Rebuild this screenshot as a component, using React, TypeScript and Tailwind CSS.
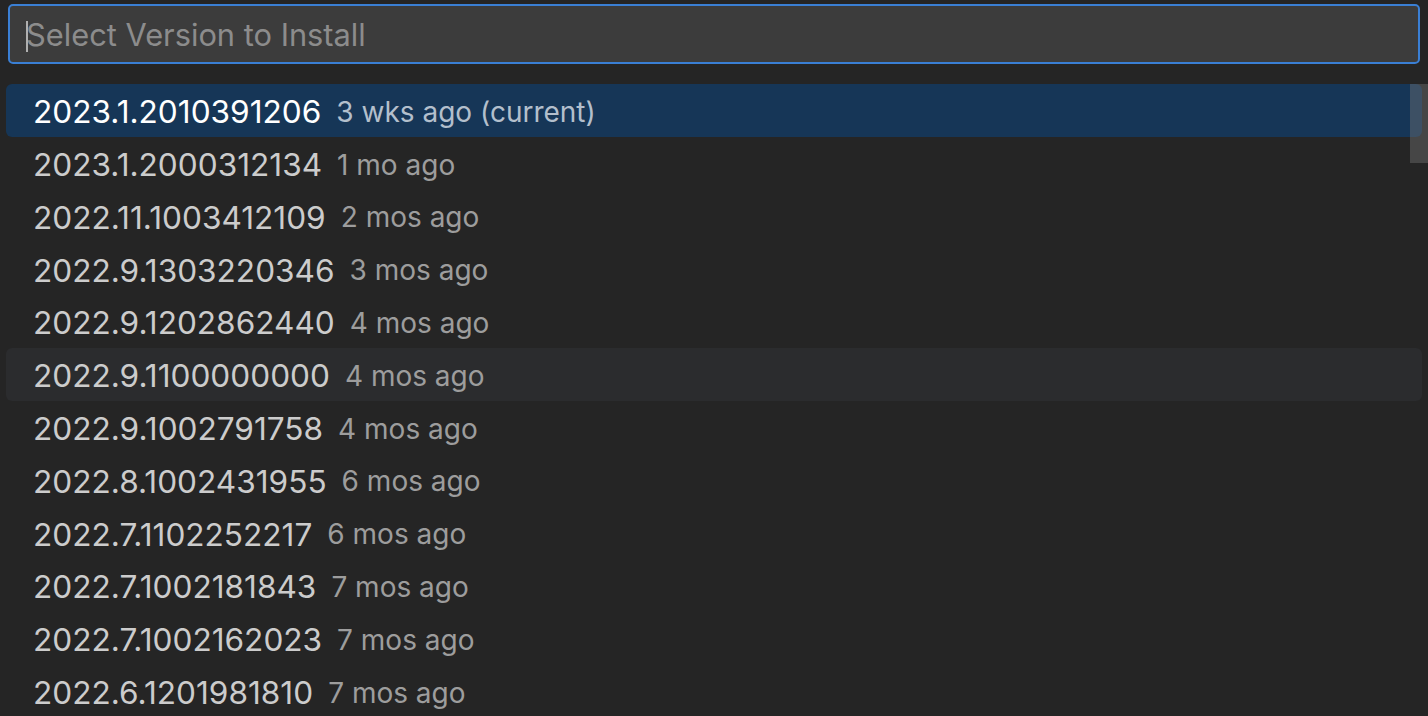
import React from 'react'

// ── Data ─────────────────────────────────────────────────────────────────────
const VERSIONS: { version: string; ago: string }[] = [
  { version: '2023.1.2010391206', ago: '3 wks ago (current)' },
  { version: '2023.1.2000312134', ago: '1 mo ago' },
  { version: '2022.11.1003412109', ago: '2 mos ago' },
  { version: '2022.9.1303220346', ago: '3 mos ago' },
  { version: '2022.9.1202862440', ago: '4 mos ago' },
  { version: '2022.9.1100000000', ago: '4 mos ago' },
  { version: '2022.9.1002791758', ago: '4 mos ago' },
  { version: '2022.8.1002431955', ago: '6 mos ago' },
  { version: '2022.7.1102252217', ago: '6 mos ago' },
  { version: '2022.7.1002181843', ago: '7 mos ago' },
  { version: '2022.7.1002162023', ago: '7 mos ago' },
  { version: '2022.6.1201981810', ago: '7 mos ago' },
]

const FONT = "font-['Inter','Noto_Sans',sans-serif]"

// ── Row ──────────────────────────────────────────────────────────────────────
function VersionRow({ version, ago, selected, hovered }: {
  version: string; ago: string; selected?: boolean; hovered?: boolean
}) {
  const bg = selected ? 'bg-[#163657]' : hovered ? 'bg-[#2b2c2e]' : ''
  return (
    <div className={`h-[52.8px] flex items-center rounded-[6px] pl-[27px] pt-[3px] ${bg}`}>
      <span className={`text-[31.6px] ${selected ? 'text-white' : 'text-[#cccccc]'}`}>
        {version}
      </span>
      <span className={`ml-[15px] text-[28px] ${selected ? 'text-[#b3bfcc]' : 'text-[#9d9d9d]'}`}>
        {ago}
      </span>
    </div>
  )
}

export default function App() {
  return (
    <div className={`w-[1428px] h-[716px] overflow-hidden bg-[#252525] ${FONT}`}>
      {/* search box */}
      <div className="px-[8px] pt-[4px]">
        <div className="relative h-[60px] rounded-[5px] border-2 border-[#3a7fd4] bg-[#3c3c3c] flex items-center">
          <span className="absolute left-[16px] top-[15px] w-[2px] h-[31px] bg-[#b0b0b0]" />
          <input
            readOnly
            placeholder="Select Version to Install"
            className="w-full h-full bg-transparent outline-none pl-[16px] text-[30.8px] text-[#cccccc] placeholder:text-[#8c8c8c]"
          />
        </div>
      </div>

      {/* list */}
      <div className="relative mt-[20px] px-[6px]">
        {VERSIONS.map((v, i) => (
          <VersionRow key={v.version} version={v.version} ago={v.ago} selected={i === 0} hovered={i === 5} />
        ))}
        {/* scrollbar thumb */}
        <div className="absolute right-0 top-0 w-[18px] h-[79px] bg-[#797979]/40" />
      </div>
    </div>
  )
}
